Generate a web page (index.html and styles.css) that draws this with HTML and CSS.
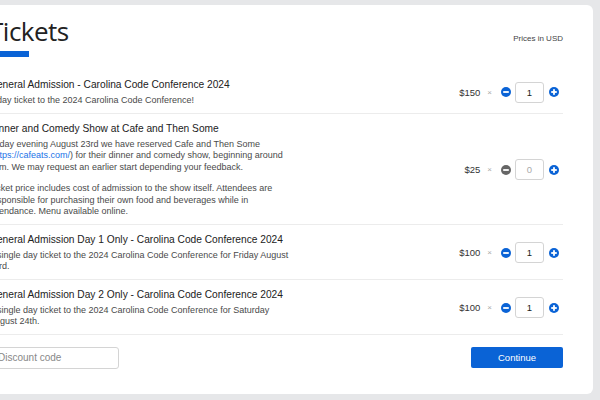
FILE: index.html
```html
<!DOCTYPE html>
<html lang="en">
<head>
    <meta charset="UTF-8">
    <meta name="viewport" content="width=device-width, initial-scale=1.0">
    <title>Tickets</title>
    <link rel="stylesheet" href="styles.css">
</head>
<body>

<div class="card">
    <div class="card-header">
        <h1>Tickets</h1>
        <span class="currency-note">Prices in USD</span>
    </div>
    <div class="title-bar"></div>

    <div class="ticket-list">
        <div class="ticket-row">
            <div class="ticket-info">
                <div class="ticket-name">General Admission - Carolina Code Conference 2024</div>
                <p class="ticket-desc">2-day ticket to the 2024 Carolina Code Conference!</p>
            </div>
            <div class="ticket-qty">
                <span class="price">$150</span>
                <span class="times">&times;</span>
                <button class="qty-btn">
                    <svg viewBox="0 0 10 10" width="10" height="10"><circle cx="5" cy="5" r="5"/><rect x="2.2" y="4.1" width="5.6" height="1.8" fill="#fff"/></svg>
                </button>
                <input class="qty-input" type="text" value="1">
                <button class="qty-btn">
                    <svg viewBox="0 0 10 10" width="10" height="10"><circle cx="5" cy="5" r="5"/><rect x="2.2" y="4.1" width="5.6" height="1.8" fill="#fff"/><rect x="4.1" y="2.2" width="1.8" height="5.6" fill="#fff"/></svg>
                </button>
            </div>
        </div>

        <div class="ticket-row">
            <div class="ticket-info">
                <div class="ticket-name">Dinner and Comedy Show at Cafe and Then Some</div>
                <p class="ticket-desc">Friday evening August 23rd we have reserved Cafe and Then Some (<a href="#">https://cafeats.com/</a>) for their dinner and comedy show, beginning around 7pm. We may request an earlier start depending your feedback.</p>
                <p class="ticket-desc">Ticket price includes cost of admission to the show itself. Attendees are responsible for purchasing their own food and beverages while in attendance. Menu available online.</p>
            </div>
            <div class="ticket-qty">
                <span class="price">$25</span>
                <span class="times">&times;</span>
                <button class="qty-btn disabled">
                    <svg viewBox="0 0 10 10" width="10" height="10"><circle cx="5" cy="5" r="5"/><rect x="2.2" y="4.1" width="5.6" height="1.8" fill="#fff"/></svg>
                </button>
                <input class="qty-input empty" type="text" value="0">
                <button class="qty-btn">
                    <svg viewBox="0 0 10 10" width="10" height="10"><circle cx="5" cy="5" r="5"/><rect x="2.2" y="4.1" width="5.6" height="1.8" fill="#fff"/><rect x="4.1" y="2.2" width="1.8" height="5.6" fill="#fff"/></svg>
                </button>
            </div>
        </div>

        <div class="ticket-row">
            <div class="ticket-info">
                <div class="ticket-name">General Admission Day 1 Only - Carolina Code Conference 2024</div>
                <p class="ticket-desc">A single day ticket to the 2024 Carolina Code Conference for Friday August 23rd.</p>
            </div>
            <div class="ticket-qty">
                <span class="price">$100</span>
                <span class="times">&times;</span>
                <button class="qty-btn">
                    <svg viewBox="0 0 10 10" width="10" height="10"><circle cx="5" cy="5" r="5"/><rect x="2.2" y="4.1" width="5.6" height="1.8" fill="#fff"/></svg>
                </button>
                <input class="qty-input" type="text" value="1">
                <button class="qty-btn">
                    <svg viewBox="0 0 10 10" width="10" height="10"><circle cx="5" cy="5" r="5"/><rect x="2.2" y="4.1" width="5.6" height="1.8" fill="#fff"/><rect x="4.1" y="2.2" width="1.8" height="5.6" fill="#fff"/></svg>
                </button>
            </div>
        </div>

        <div class="ticket-row">
            <div class="ticket-info">
                <div class="ticket-name">General Admission Day 2 Only - Carolina Code Conference 2024</div>
                <p class="ticket-desc">A single day ticket to the 2024 Carolina Code Conference for Saturday August 24th.</p>
            </div>
            <div class="ticket-qty">
                <span class="price">$100</span>
                <span class="times">&times;</span>
                <button class="qty-btn">
                    <svg viewBox="0 0 10 10" width="10" height="10"><circle cx="5" cy="5" r="5"/><rect x="2.2" y="4.1" width="5.6" height="1.8" fill="#fff"/></svg>
                </button>
                <input class="qty-input" type="text" value="1">
                <button class="qty-btn">
                    <svg viewBox="0 0 10 10" width="10" height="10"><circle cx="5" cy="5" r="5"/><rect x="2.2" y="4.1" width="5.6" height="1.8" fill="#fff"/><rect x="4.1" y="2.2" width="1.8" height="5.6" fill="#fff"/></svg>
                </button>
            </div>
        </div>
    </div>

    <div class="card-footer">
        <input class="discount-input" type="text" placeholder="Discount code">
        <button class="continue-btn">Continue</button>
    </div>
</div>

</body>
</html>
```

FILE: styles.css
```css
body {
    font-family: 'Liberation Sans', Arial, sans-serif;
    background-color: #e6e7e9;
    margin: 0;
    padding: 0;
    overflow: hidden;
}
.card {
    background-color: white;
    margin: 5px 7px 6px -41px;
    padding: 10px 30px 25px 30px;
    border-radius: 6px;
}
.card-header {
    display: flex;
    justify-content: space-between;
    align-items: baseline;
}
h1 {
    font-family: 'Open Sans', sans-serif;
    font-weight: 500;
    font-size: 26px;
    line-height: 32px;
    color: #222;
    margin: 0;
    letter-spacing: -0.5px;
}
.currency-note {
    font-size: 8px;
    color: #444;
}
.title-bar {
    width: 40px;
    height: 6px;
    background-color: #0a63d6;
    margin-top: 4px;
    margin-bottom: 13px;
}
.ticket-row {
    display: flex;
    align-items: center;
    justify-content: space-between;
    padding: 8px 0 6px 0;
    border-bottom: 1px solid #ececec;
}
.ticket-info {
    width: 303px;
}
.ticket-name {
    font-size: 10.2px;
    line-height: 14px;
    color: #222;
    margin-bottom: 3px;
}
.ticket-desc {
    font-size: 9px;
    line-height: 11.5px;
    color: #4a4a4a;
    margin: 0;
}
.ticket-desc + .ticket-desc {
    margin-top: 10px;
}
.ticket-desc a {
    color: #1a73e8;
    text-decoration: none;
}
.ticket-qty {
    display: flex;
    align-items: center;
    margin-right: 4px;
}
.price {
    font-size: 9.5px;
    color: #333;
    margin-right: 7px;
}
.times {
    font-size: 8px;
    color: #aaa;
    margin-right: 9px;
}
.qty-btn {
    background: none;
    border: none;
    padding: 0;
    width: 10px;
    height: 10px;
    cursor: pointer;
    fill: #0a63d6;
    display: flex;
}
.qty-btn.disabled {
    fill: #666;
}
.qty-input {
    width: 29px;
    height: 21px;
    box-sizing: border-box;
    border: 1px solid #d4d4d4;
    border-radius: 3px;
    margin: 0 5px 0 4px;
    text-align: center;
    font-family: 'Liberation Sans', Arial, sans-serif;
    font-size: 9.5px;
    color: #222;
    padding: 0;
}
.qty-input.empty {
    color: #aaa;
}
.card-footer {
    display: flex;
    justify-content: space-between;
    align-items: center;
    margin-top: 12px;
}
.discount-input {
    width: 130px;
    height: 22px;
    box-sizing: border-box;
    border: 1px solid #d4d4d4;
    border-radius: 3px;
    padding: 0 8px;
    font-family: 'Liberation Sans', Arial, sans-serif;
    font-size: 10px;
}
.discount-input::placeholder {
    color: #888;
}
.continue-btn {
    background-color: #0a63d6;
    color: white;
    border: none;
    border-radius: 2px;
    width: 92px;
    height: 21px;
    font-family: 'Liberation Sans', Arial, sans-serif;
    font-size: 9.5px;
    cursor: pointer;
}
```
